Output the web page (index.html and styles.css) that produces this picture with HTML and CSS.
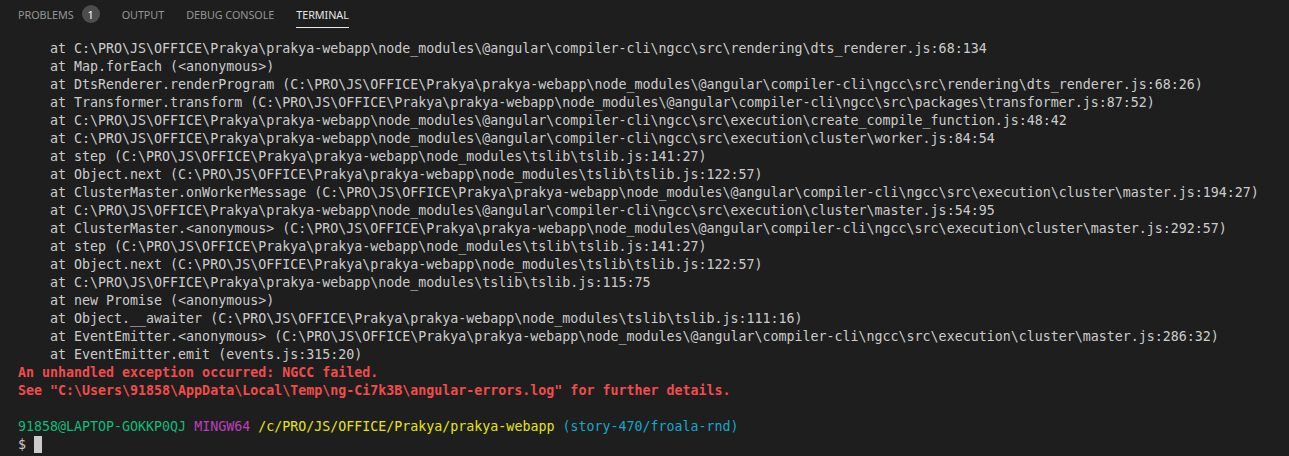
FILE: index.html
```html
<!DOCTYPE html>
<html>
<head>
<meta charset="utf-8">
<link rel="stylesheet" href="styles.css">
</head>
<body>
<div class="panel">
  <div class="tabs">
    <div class="tab">PROBLEMS <span class="badge">1</span></div>
    <div class="tab">OUTPUT</div>
    <div class="tab">DEBUG CONSOLE</div>
    <div class="tab active">TERMINAL</div>
  </div>
  <pre class="term">    at C:\PRO\JS\OFFICE\Prakya\prakya-webapp\node_modules\@angular\compiler-cli\ngcc\src\rendering\dts_renderer.js:68:134
    at Map.forEach (&lt;anonymous&gt;)
    at DtsRenderer.renderProgram (C:\PRO\JS\OFFICE\Prakya\prakya-webapp\node_modules\@angular\compiler-cli\ngcc\src\rendering\dts_renderer.js:68:26)
    at Transformer.transform (C:\PRO\JS\OFFICE\Prakya\prakya-webapp\node_modules\@angular\compiler-cli\ngcc\src\packages\transformer.js:87:52)
    at C:\PRO\JS\OFFICE\Prakya\prakya-webapp\node_modules\@angular\compiler-cli\ngcc\src\execution\create_compile_function.js:48:42
    at C:\PRO\JS\OFFICE\Prakya\prakya-webapp\node_modules\@angular\compiler-cli\ngcc\src\execution\cluster\worker.js:84:54
    at step (C:\PRO\JS\OFFICE\Prakya\prakya-webapp\node_modules\tslib\tslib.js:141:27)
    at Object.next (C:\PRO\JS\OFFICE\Prakya\prakya-webapp\node_modules\tslib\tslib.js:122:57)
    at ClusterMaster.onWorkerMessage (C:\PRO\JS\OFFICE\Prakya\prakya-webapp\node_modules\@angular\compiler-cli\ngcc\src\execution\cluster\master.js:194:27)
    at C:\PRO\JS\OFFICE\Prakya\prakya-webapp\node_modules\@angular\compiler-cli\ngcc\src\execution\cluster\master.js:54:95
    at ClusterMaster.&lt;anonymous&gt; (C:\PRO\JS\OFFICE\Prakya\prakya-webapp\node_modules\@angular\compiler-cli\ngcc\src\execution\cluster\master.js:292:57)
    at step (C:\PRO\JS\OFFICE\Prakya\prakya-webapp\node_modules\tslib\tslib.js:141:27)
    at Object.next (C:\PRO\JS\OFFICE\Prakya\prakya-webapp\node_modules\tslib\tslib.js:122:57)
    at C:\PRO\JS\OFFICE\Prakya\prakya-webapp\node_modules\tslib\tslib.js:115:75
    at new Promise (&lt;anonymous&gt;)
    at Object.__awaiter (C:\PRO\JS\OFFICE\Prakya\prakya-webapp\node_modules\tslib\tslib.js:111:16)
    at EventEmitter.&lt;anonymous&gt; (C:\PRO\JS\OFFICE\Prakya\prakya-webapp\node_modules\@angular\compiler-cli\ngcc\src\execution\cluster\master.js:286:32)
    at EventEmitter.emit (events.js:315:20)
<span class="red">An unhandled exception occurred: NGCC failed.</span>
<span class="red">See "C:\Users\91858\AppData\Local\Temp\ng-Ci7k3B\angular-errors.log" for further details.</span>

<span class="green">91858@LAPTOP-GOKKP0QJ</span> <span class="magenta">MINGW64</span> <span class="yellow">/c/PRO/JS/OFFICE/Prakya/prakya-webapp</span> <span class="cyan">(story-470/froala-rnd)</span>
$ <span class="cursor"> </span></pre>
</div>
</body>
</html>
```

FILE: styles.css
```css
html, body {
  margin: 0;
  padding: 0;
  background: #1e1e1e;
  width: 1289px;
  height: 456px;
  overflow: hidden;
}

.panel {
  display: flex;
  flex-direction: column;
  height: 456px;
  background: #1e1e1e;
}

.tabs {
  display: flex;
  align-items: stretch;
  gap: 22px;
  height: 28px;
  padding: 0 0 0 18px;
  font-family: "Noto Sans", "Open Sans", sans-serif;
  font-size: 10.8px;
  letter-spacing: -0.05px;
  color: #969696;
}

.tab {
  display: flex;
  align-items: center;
  gap: 8px;
  border-bottom: 1px solid transparent;
  padding-top: 1px;
}

.tab.active {
  color: #e7e7e7;
  border-bottom-color: #e7e7e7;
}

.badge {
  display: inline-flex;
  align-items: center;
  justify-content: center;
  width: 18px;
  height: 18px;
  border-radius: 50%;
  background: #4d4d4d;
  color: #ffffff;
  font-size: 11px;
  letter-spacing: 0;
}

.term {
  margin: 12px 0 0 0;
  padding: 0 0 0 18px;
  font-family: "DejaVu Sans Mono", "Liberation Mono", monospace;
  font-size: 13.3px;
  line-height: 18px;
  color: #cccccc;
  white-space: pre;
}

.red { color: #f14c4c; font-weight: bold; }
.green { color: #0dbc79; }
.magenta { color: #bc3fbc; }
.yellow { color: #e5e510; }
.cyan { color: #11a8cd; }

.cursor {
  display: inline-block;
  width: 8px;
  height: 17px;
  vertical-align: top;
  background: #cccccc;
}
```
